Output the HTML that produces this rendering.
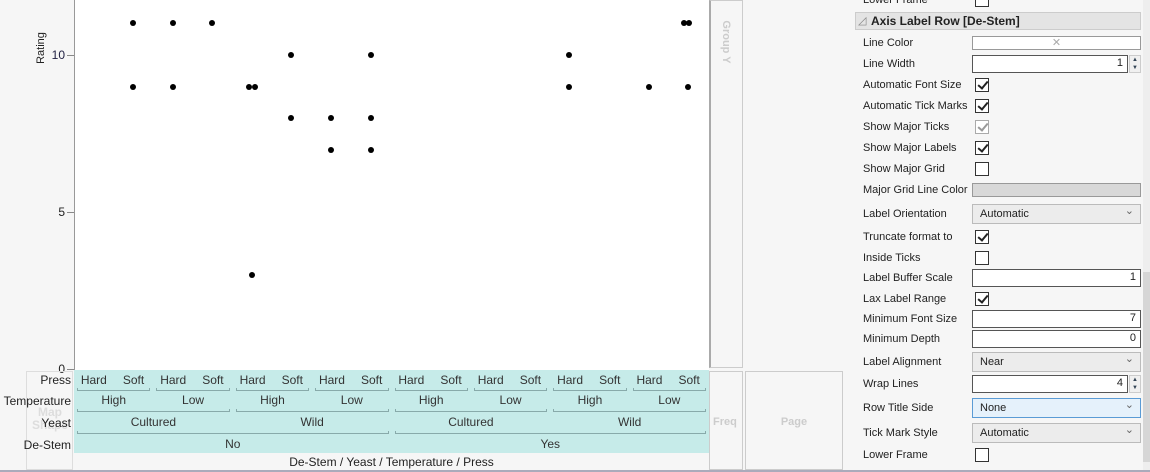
<!DOCTYPE html>
<html><head><meta charset="utf-8"><style>
*{margin:0;padding:0;box-sizing:border-box}
body{width:1150px;height:472px;overflow:hidden;background:#f6f6f6;font-family:"Liberation Sans",sans-serif;position:relative;color:#222}
.a{position:absolute}
.dot{position:absolute;width:6px;height:6px;border-radius:50%;background:#000;margin:-3px 0 0 -3px}
.lbl{position:absolute;left:863px;font-size:11px;color:#222;transform:translateY(-50%);white-space:nowrap}
.cb{position:absolute;left:975px;width:14px;height:14px;border:1px solid #333;background:#fff;transform:translateY(-50%)}
.cb.k::after{content:"";position:absolute;left:4px;top:0px;width:4px;height:8px;border:solid #222;border-width:0 2px 2px 0;transform:rotate(40deg)}
.cb.g{border-color:#aaa}.cb.g::after{border-color:#999}
.tb{position:absolute;left:972px;width:156px;height:18px;border:1px solid #555;background:#fff;transform:translateY(-50%);font-size:11px;text-align:right;padding-right:4px;line-height:15px}
.spin{position:absolute;left:1129px;width:12px;height:18px;transform:translateY(-50%);background:#f0f0f0;border:1px solid #ccc;font-size:6px;line-height:8px;text-align:center;color:#345}
.dd{position:absolute;left:972px;width:169px;height:20px;border:1px solid #bbb;background:#ececec;transform:translateY(-50%);font-size:11px;line-height:18px;padding-left:7px}
.dd::after{content:"⌄";position:absolute;right:6px;top:-3px;color:#666;font-size:11px}
.cell{position:absolute;text-align:center;font-size:12px;color:#333}
.brk{position:absolute;height:3px;border:1px solid #8aa;border-top:none}
.rt{position:absolute;right:1079px;font-size:12px;text-align:right;white-space:nowrap}
.yl{position:absolute;right:1085px;font-size:12px;text-align:right}
</style></head><body>
<div class="a" style="left:74px;top:0;width:635px;height:370px;background:#fff;border-left:1px solid #999"></div>
<div class="a" style="top:48px;font-size:11px;transform:translate(-50%,-50%) rotate(-90deg);left:41px">Rating</div>
<div class="yl" style="top:48px;color:#224">10</div>
<div class="yl" style="top:205px">5</div>
<div class="yl" style="top:362px">0</div>
<div class="a" style="left:67px;top:55px;width:7px;height:1px;background:#888"></div>
<div class="a" style="left:67px;top:212px;width:7px;height:1px;background:#888"></div>
<div class="a" style="left:67px;top:369px;width:7px;height:1px;background:#888"></div>
<div class="dot" style="left:133px;top:23px"></div><div class="dot" style="left:173px;top:23px"></div><div class="dot" style="left:212px;top:23px"></div>
<div class="dot" style="left:133px;top:87px"></div><div class="dot" style="left:173px;top:87px"></div>
<div class="dot" style="left:249px;top:87px"></div><div class="dot" style="left:255px;top:87px"></div>
<div class="dot" style="left:291px;top:55px"></div><div class="dot" style="left:291px;top:118px"></div>
<div class="dot" style="left:331px;top:118px"></div><div class="dot" style="left:331px;top:150px"></div>
<div class="dot" style="left:371px;top:55px"></div><div class="dot" style="left:371px;top:118px"></div><div class="dot" style="left:371px;top:150px"></div>
<div class="dot" style="left:252px;top:275px"></div>
<div class="dot" style="left:569px;top:55px"></div><div class="dot" style="left:569px;top:87px"></div>
<div class="dot" style="left:649px;top:87px"></div>
<div class="dot" style="left:684px;top:23px"></div><div class="dot" style="left:689px;top:23px"></div><div class="dot" style="left:688px;top:87px"></div>
<div class="a" style="left:26px;top:371px;width:47px;height:99px;border:1px solid #ddd"></div>
<div class="a" style="left:30px;top:406px;font-size:12px;font-weight:bold;color:#ddd;line-height:13px;text-align:center;width:40px">Map<br>Shape</div>
<div class="rt" style="top:373px">Press</div>
<div class="rt" style="top:394px">Temperature</div>
<div class="rt" style="top:416px">Yeast</div>
<div class="rt" style="top:438px">De-Stem</div>
<div class="a" style="left:74px;top:370px;width:635px;height:83px;background:#c6ebe9"></div>
<div id="lab"></div>
<div class="a" style="left:74px;top:455px;width:635px;text-align:center;font-size:12px">De-Stem / Yeast / Temperature / Press</div>
<div class="a" style="left:709px;top:0;width:34px;height:368px;border:1px solid #ccc;border-left:2px solid #aaa"></div>
<div class="a" style="left:726px;top:42px;font-size:11px;font-weight:bold;color:#ccc;transform:translate(-50%,-50%) rotate(90deg)">Group Y</div>
<div class="a" style="left:709px;top:371px;width:34px;height:99px;border:1px solid #ccc"></div>
<div class="a" style="left:713px;top:416px;font-size:11px;font-weight:bold;color:#ccc">Freq</div>
<div class="a" style="left:745px;top:371px;width:98px;height:99px;border:1px solid #ccc"></div>
<div class="a" style="left:745px;top:416px;width:98px;text-align:center;font-size:11px;font-weight:bold;color:#ccc">Page</div>
<div class="a" style="left:0;top:470px;width:1150px;height:2px;background:#aab"></div>
<div class="a" style="left:1143px;top:0;width:7px;height:470px;background:#eee"></div>
<div class="a" style="left:1143px;top:272px;width:7px;height:190px;background:#d6d6d6"></div>
<div class="lbl" style="top:0px">Lower Frame</div><div class="cb" style="top:0px"></div>
<div class="a" style="left:855px;top:12px;width:286px;height:18px;background:#e4e4e4;border:1px solid #ccc"></div>
<div class="a" style="left:858px;top:14px;font-size:11px;color:#888">◿</div>
<div class="a" style="left:871px;top:14px;font-size:12px;font-weight:bold">Axis Label Row [De-Stem]</div>
<div id="rp"></div>
<script>
var L=document.getElementById('lab'),h='';
var x0=74,w=635/16;
var pr=['Hard','Soft'];
for(var i=0;i<16;i++){h+='<div class="cell" style="left:'+(x0+i*w)+'px;top:373px;width:'+w+'px">'+pr[i%2]+'</div>';}
function row(n,top,labels){var cw=635/n;for(var i=0;i<n;i++){h+='<div class="cell" style="left:'+(x0+i*cw)+'px;top:'+top+'px;width:'+cw+'px">'+labels[i%labels.length]+'</div>';}}
function br(n,top){var cw=635/n;for(var i=0;i<n;i++){h+='<div class="brk" style="left:'+(x0+i*cw+3)+'px;top:'+top+'px;width:'+(cw-6)+'px"></div>';}}
br(8,388);row(8,393,['High','Low']);br(4,409);row(4,415,['Cultured','Wild']);br(2,431);row(2,437,['No','Yes']);
L.innerHTML=h;
var R=document.getElementById('rp'),r='';
var rows=[['Line Color',43,'lc'],['Line Width',64,'tb','1',1],['Automatic Font Size',85,'k'],['Automatic Tick Marks',106,'k'],['Show Major Ticks',127,'g'],['Show Major Labels',148,'k'],['Show Major Grid',169,'e'],['Major Grid Line Color',190,'gc'],['Label Orientation',214,'dd','Automatic'],['Truncate format to',237,'k'],['Inside Ticks',258,'e'],['Label Buffer Scale',278,'tb','1'],['Lax Label Range',299,'k'],['Minimum Font Size',319,'tb','7'],['Minimum Depth',339,'tb','0'],['Label Alignment',362,'dd','Near'],['Wrap Lines',384,'tb','4',1],['Row Title Side',408,'ddb','None'],['Tick Mark Style',433,'dd','Automatic'],['Lower Frame',455,'e']];
rows.forEach(function(q){var t=q[1];r+='<div class="lbl" style="top:'+t+'px">'+q[0]+'</div>';
if(q[2]=='k')r+='<div class="cb k" style="top:'+t+'px"></div>';
if(q[2]=='g')r+='<div class="cb k g" style="top:'+t+'px"></div>';
if(q[2]=='e')r+='<div class="cb" style="top:'+t+'px"></div>';
if(q[2]=='lc')r+='<div class="tb" style="top:'+t+'px;width:169px;height:14px;border-color:#999;text-align:center;color:#aaa;line-height:12px;padding:0">✕</div>';
if(q[2]=='gc')r+='<div class="tb" style="top:'+t+'px;width:169px;height:14px;border-color:#999;background:#d8d8d8"></div>';
if(q[2]=='tb'){r+='<div class="tb" style="top:'+t+'px;'+(q[4]?'':'width:169px;')+'">'+q[3]+'</div>';if(q[4])r+='<div class="spin" style="top:'+t+'px">▲<br>▼</div>';}
if(q[2]=='dd')r+='<div class="dd" style="top:'+t+'px">'+q[3]+'</div>';
if(q[2]=='ddb')r+='<div class="dd" style="top:'+t+'px;background:#e5f1fb;border-color:#5a9bd5">'+q[3]+'</div>';
});
R.innerHTML=r;
</script>
</body></html>
